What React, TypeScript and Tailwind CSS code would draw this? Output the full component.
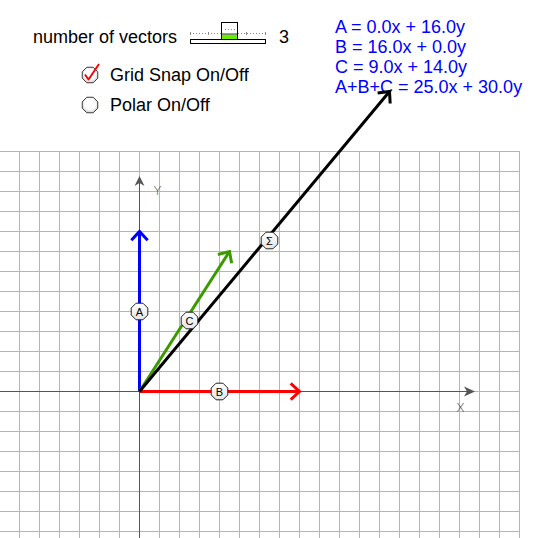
import React from "react";

const O = { x: 139.5, y: 240.5 };
const UNIT = 10;

type Vec = { name: string; dx: number; dy: number; color: string; label: [number, number] };

const vectors: Vec[] = [
  { name: "A", dx: 0, dy: 16, color: "#0000ff", label: [139.5, 160.5] },
  { name: "B", dx: 16, dy: 0, color: "#ff0000", label: [219.5, 240.5] },
  { name: "C", dx: 9, dy: 14, color: "#3a9a00", label: [189.5, 169.5] },
  { name: "Σ", dx: 25, dy: 30, color: "#000000", label: [269.5, 89.5] },
];

function octagon(cx: number, cy: number, r: number) {
  const pts: string[] = [];
  for (let i = 0; i < 8; i++) {
    const a = ((22.5 + i * 45) * Math.PI) / 180;
    pts.push(`${(cx + r * Math.cos(a)).toFixed(2)},${(cy + r * Math.sin(a)).toFixed(2)}`);
  }
  return pts.join(" ");
}

function chevron(x1: number, y1: number, x2: number, y2: number, len = 12, ang = (43 * Math.PI) / 180) {
  const a = Math.atan2(y2 - y1, x2 - x1);
  const p1 = [x2 - len * Math.cos(a - ang), y2 - len * Math.sin(a - ang)];
  const p2 = [x2 - len * Math.cos(a + ang), y2 - len * Math.sin(a + ang)];
  return `${p1[0]},${p1[1]} ${x2},${y2} ${p2[0]},${p2[1]}`;
}

function Box({ checked }: { checked?: boolean }) {
  return (
    <svg width={16} height={16} className="block overflow-visible">
      <defs>
        <radialGradient id="boxfill" cx="0.5" cy="0.45" r="0.6">
          <stop offset="0.55" stopColor="#ffffff" />
          <stop offset="1" stopColor="#c4c4c4" />
        </radialGradient>
      </defs>
      <polygon points={octagon(8, 8, 8.4)} fill="url(#boxfill)" stroke="#3a3a3a" strokeWidth={1} />
      {checked && (
        <polyline
          points="3,7.5 6.5,12.5 17,-3"
          fill="none"
          stroke="#ff0000"
          strokeWidth={2}
          strokeLinejoin="round"
        />
      )}
    </svg>
  );
}

function Slider() {
  return (
    <svg width={76} height={22} className="block">
      <line x1={0} y1={11.5} x2={76} y2={11.5} stroke="#888" strokeDasharray="1 2" />
      {[0.5, 18.5, 37.5, 56.5, 75.5].map((x) => (
        <line key={x} x1={x} y1={10} x2={x} y2={13} stroke="#888" />
      ))}
      <rect x={0.5} y={17.5} width={75} height={4} fill="#fff" stroke="#000" />
      <rect x={31.5} y={0.5} width={16} height={17} fill="#fff" stroke="#000" />
      <line x1={35} y1={7.5} x2={45} y2={7.5} stroke="#888" strokeDasharray="1 2" />
      <rect x={32} y={12.5} width={15} height={4.5} fill="#66ee00" />
      <line x1={32} y1={12} x2={47} y2={12} stroke="#333" />
    </svg>
  );
}

function Graph() {
  const vlines = Array.from({ length: 26 }, (_, i) => 19.5 + i * 20);
  const hlines = Array.from({ length: 20 }, (_, i) => 0.5 + i * 20);
  return (
    <svg width={558} height={387} className="block overflow-visible">
      <defs>
        <linearGradient id="markfill" x1="0" y1="0" x2="0" y2="1">
          <stop offset="0" stopColor="#ffffff" />
          <stop offset="1" stopColor="#e4e4e4" />
        </linearGradient>
      </defs>
      {vlines.map((x) => (
        <line key={`v${x}`} x1={x} y1={0} x2={x} y2={387} stroke="#b5b5b5" />
      ))}
      {hlines.map((y) => (
        <line key={`h${y}`} x1={0} y1={y} x2={520} y2={y} stroke="#b5b5b5" />
      ))}

      {/* axes */}
      <line x1={0} y1={O.y} x2={468} y2={O.y} stroke="#555" />
      <polygon points="475,240.5 464,235.5 467,240.5 464,245.5" fill="#555" />
      <line x1={O.x} y1={387} x2={O.x} y2={31} stroke="#555" />
      <polygon points="139.5,25 134.5,35 139.5,32 144.5,35" fill="#555" />
      <text x={460.5} y={261} fontSize={13} fill="#444" textAnchor="middle" fontFamily="'DejaVu Sans', sans-serif" fontWeight={200}>
        X
      </text>
      <text x={157.5} y={44} fontSize={13} fill="#444" textAnchor="middle" fontFamily="'DejaVu Sans', sans-serif" fontWeight={200}>
        Y
      </text>

      {vectors.map((v) => {
        const x2 = O.x + v.dx * UNIT;
        const y2 = O.y - v.dy * UNIT;
        return (
          <g key={v.name} stroke={v.color} strokeWidth={3} fill="none">
            <line x1={O.x} y1={O.y} x2={x2} y2={y2} />
            <polyline points={chevron(O.x, O.y, x2, y2)} strokeLinejoin="miter" />
          </g>
        );
      })}

      {vectors.map((v) => (
        <g key={`l${v.name}`}>
          <polygon points={octagon(v.label[0], v.label[1], 9)} fill="url(#markfill)" stroke="#222" strokeWidth={1} />
          <text
            x={v.label[0]}
            y={v.label[1] + 4}
            fontSize={11}
            textAnchor="middle"
            fill="#000"
            fontFamily="'Liberation Sans', Arial, sans-serif"
          >
            {v.name}
          </text>
        </g>
      ))}
    </svg>
  );
}

export default function App() {
  return (
    <div className="w-[558px] h-[538px] overflow-hidden bg-white font-['Liberation_Sans',Arial,sans-serif] text-[18px] leading-[20px] text-black">
      <div className="flex h-[151px]">
        <div className="w-[335px] pt-[22px]">
          <div className="flex items-start pl-[33px]">
            <span className="mt-[5px]">number of vectors</span>
            <div className="ml-[13px]">
              <Slider />
            </div>
            <span className="ml-[13px] mt-[5px]">3</span>
          </div>
          <div className="mt-[18px] flex items-center gap-3 pl-[82px]">
            <Box checked />
            <span>Grid Snap On/Off</span>
          </div>
          <div className="mt-[10px] flex items-center gap-3 pl-[82px]">
            <Box />
            <span>Polar On/Off</span>
          </div>
        </div>
        <div className="pt-[17px] text-[#0000ff]">
          <div>A = 0.0x + 16.0y</div>
          <div>B = 16.0x + 0.0y</div>
          <div>C = 9.0x + 14.0y</div>
          <div>A+B+C = 25.0x + 30.0y</div>
        </div>
      </div>
      <Graph />
    </div>
  );
}
